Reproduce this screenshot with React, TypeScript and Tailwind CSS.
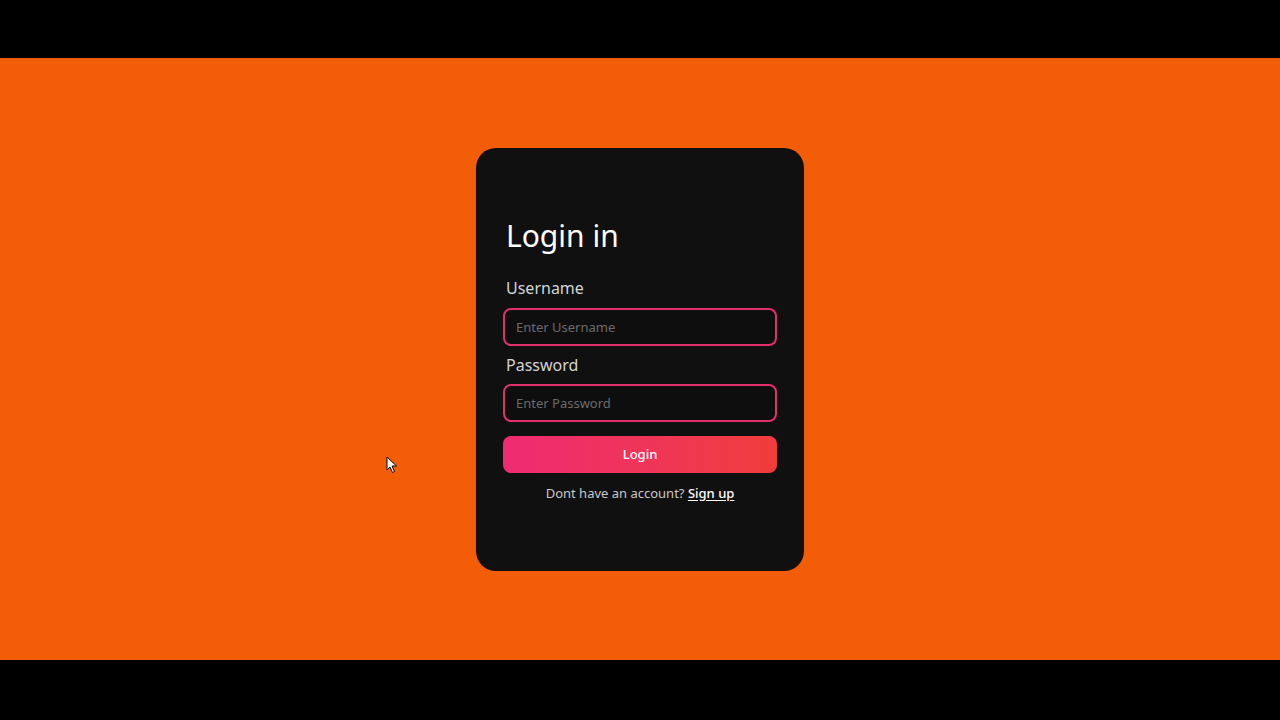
export default function App() {
  return (
    <div className="w-[1280px] h-[720px] bg-black flex flex-col" style={{ fontFamily: '"Noto Sans", "Open Sans", sans-serif' }}>
      <div className="h-[58px] shrink-0" />
      <div className="relative flex-1 bg-[#f35d07] flex justify-center pt-[90px]">
        {/* Card */}
        <div className="w-[328px] h-[423px] rounded-[20px] bg-[#101010] px-[27px] pt-[68px] flex flex-col">
          <h1 className="text-[30px] leading-[40px] text-white pl-[3px]">Login in</h1>

          <label className="mt-[22px] text-[16px] leading-[20px] text-[#d4d4d4] pl-[3px]">Username</label>
          <input
            type="text"
            placeholder="Enter Username"
            className="mt-[10px] h-[38px] w-full rounded-[8px] border-2 border-[#e52f6a] bg-[#0e0e0f] px-[11px] text-[13px] text-white placeholder:text-[#6b6b6b] outline-none"
          />

          <label className="mt-[9px] text-[16px] leading-[20px] text-[#d4d4d4] pl-[3px]">Password</label>
          <input
            type="password"
            placeholder="Enter Password"
            className="mt-[9px] h-[38px] w-full rounded-[8px] border-2 border-[#e52f6a] bg-[#0e0e0f] px-[11px] text-[13px] text-white placeholder:text-[#6b6b6b] outline-none"
          />

          <button className="mt-[14px] h-[37px] w-full rounded-[8px] bg-gradient-to-r from-[#ef2a72] to-[#f03c3a] text-[13px] font-medium text-white">
            Login
          </button>

          <p className="mt-[12px] text-center text-[13px] leading-[16px] text-[#c9c9c9]">
            Dont have an account?{' '}
            <a className="font-medium text-white underline underline-offset-2">Sign up</a>
          </p>
        </div>

        {/* Mouse cursor */}
        <svg className="absolute left-[386px] top-[398px]" width="12" height="18" viewBox="0 0 12 18">
          <path d="M1 1 L1 14 L4 11 L6.5 16.5 L8.5 15.5 L6 10 L10.5 10 Z" fill="#fff" stroke="#000" strokeWidth="1" strokeLinejoin="round" />
        </svg>
      </div>
      <div className="h-[60px] shrink-0" />
    </div>
  );
}
